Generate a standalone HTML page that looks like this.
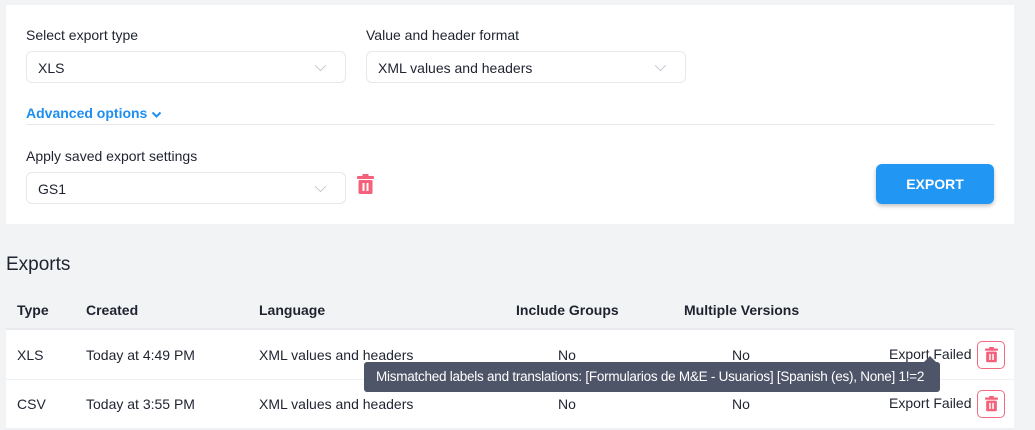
<!DOCTYPE html>
<html><head><meta charset="utf-8"><style>
*{box-sizing:border-box;margin:0;padding:0}
body{width:1035px;height:430px;background:#f2f3f5;font-family:"Liberation Sans",Arial,sans-serif;color:#1f2330;position:relative;overflow:hidden;font-size:14px}
.abs{position:absolute}
.card{left:6px;top:5px;width:1008px;height:219px;background:#fff}
.lbl{font-size:14px;color:#1f2330}
.sel{border:1px solid #e6e8ec;border-radius:6px;height:32px;background:#fff;font-size:14px;padding:8px 0 0 11px}
.chev{position:absolute;right:20px;top:9px;width:9px;height:9px;border-right:1.5px solid #c2c6cd;border-bottom:1.5px solid #c2c6cd;transform:rotate(45deg) scale(.9)}
.btn{left:876px;top:164px;width:118px;height:40px;background:#2196f3;border-radius:6px;color:#fff;font-weight:bold;font-size:14px;text-align:center;line-height:40px;box-shadow:0 2px 4px rgba(0,0,0,.25)}
.th{font-weight:bold;font-size:14px;top:302px}
.row{left:6px;width:1008px;height:49px;background:#fff}
.td{font-size:14px}
.del{width:28px;height:28px;border:1px solid #f36b80;border-radius:5px;background:#fff}
.tip{left:364px;top:362px;width:576px;height:30px;background:#4f5568;color:#fff;font-size:13.5px;line-height:30px;padding-left:12px;border-radius:3px;white-space:nowrap;letter-spacing:-0.25px}
</style></head><body>
<div class="abs card"></div>
<div class="abs lbl" style="left:26px;top:27px">Select export type</div>
<div class="abs lbl" style="left:366px;top:27px">Value and header format</div>
<div class="abs sel" style="left:26px;top:51px;width:320px">XLS<span class="chev"></span></div>
<div class="abs sel" style="left:366px;top:51px;width:320px">XML values and headers<span class="chev"></span></div>
<div class="abs" style="left:26px;top:105px;color:#1e8ef0;font-weight:bold;font-size:14px">Advanced options <svg width="11" height="9" viewBox="0 0 11 9" style="vertical-align:-1px"><path d="M1.5 2.5 L5.5 6.5 L9.5 2.5" stroke="#1e8ef0" stroke-width="2" fill="none"/></svg></div>
<div class="abs" style="left:26px;top:124px;width:968px;height:1px;background:#e6e8ec"></div>
<div class="abs lbl" style="left:26px;top:148px">Apply saved export settings</div>
<div class="abs sel" style="left:26px;top:172px;width:320px">GS1<span class="chev"></span></div>
<svg class="abs" style="left:357px;top:174px" width="17" height="21" viewBox="0 0 17 21"><rect x="5.5" y="0" width="6" height="2.5" fill="#f5607a"/><rect x="0" y="2" width="17" height="3" rx="1" fill="#f5607a"/><rect x="1.5" y="6" width="14" height="14" rx="1.5" fill="#f5607a"/><rect x="5.5" y="9" width="2" height="8" fill="#fff"/><rect x="9.5" y="9" width="2" height="8" fill="#fff"/></svg>
<div class="abs btn">EXPORT</div>

<div class="abs" style="left:6px;top:254px;font-size:19px;color:#1f2330">Exports</div>
<div class="abs th" style="left:17px">Type</div>
<div class="abs th" style="left:86px">Created</div>
<div class="abs th" style="left:259px">Language</div>
<div class="abs th" style="left:516px">Include Groups</div>
<div class="abs th" style="left:684px">Multiple Versions</div>
<div class="abs" style="left:6px;top:328px;width:1008px;height:2px;background:#e8eaee"></div>
<div class="abs row" style="top:330px"></div>
<div class="abs" style="left:6px;top:379px;width:1008px;height:1px;background:#eef0f3"></div>
<div class="abs row" style="top:380px"></div>
<div class="abs" style="left:6px;top:428px;width:1008px;height:2px;background:#eef0f3"></div>

<div class="abs td" style="left:17px;top:347px">XLS</div>
<div class="abs td" style="left:86px;top:347px">Today at 4:49 PM</div>
<div class="abs td" style="left:259px;top:347px">XML values and headers</div>
<div class="abs td" style="left:558px;top:347px">No</div>
<div class="abs td" style="left:732px;top:347px">No</div>
<div class="abs td" style="left:889px;top:346px">Export Failed</div>
<div class="abs td" style="left:17px;top:396px">CSV</div>
<div class="abs td" style="left:86px;top:396px">Today at 3:55 PM</div>
<div class="abs td" style="left:259px;top:396px">XML values and headers</div>
<div class="abs td" style="left:558px;top:396px">No</div>
<div class="abs td" style="left:732px;top:396px">No</div>
<div class="abs td" style="left:889px;top:395px">Export Failed</div>

<div class="abs del" style="left:977px;top:341px"><svg style="position:absolute;left:7px;top:5px" width="13" height="16" viewBox="0 0 17 21"><rect x="5.5" y="0" width="6" height="2.5" fill="#f5607a"/><rect x="0" y="2" width="17" height="3" rx="1" fill="#f5607a"/><rect x="1.5" y="6" width="14" height="14" rx="1.5" fill="#f5607a"/><rect x="5.5" y="9" width="2" height="8" fill="#fff"/><rect x="9.5" y="9" width="2" height="8" fill="#fff"/></svg></div>
<div class="abs del" style="left:977px;top:390px"><svg style="position:absolute;left:7px;top:5px" width="13" height="16" viewBox="0 0 17 21"><rect x="5.5" y="0" width="6" height="2.5" fill="#f5607a"/><rect x="0" y="2" width="17" height="3" rx="1" fill="#f5607a"/><rect x="1.5" y="6" width="14" height="14" rx="1.5" fill="#f5607a"/><rect x="5.5" y="9" width="2" height="8" fill="#fff"/><rect x="9.5" y="9" width="2" height="8" fill="#fff"/></svg></div>

<svg class="abs" style="left:923px;top:356px" width="14" height="7" viewBox="0 0 14 7"><path d="M0 7 L7 0 L14 7Z" fill="#4f5568"/></svg>
<div class="abs tip">Mismatched labels and translations: [Formularios de M&amp;E - Usuarios] [Spanish (es), None] 1!=2</div>
</body></html>
